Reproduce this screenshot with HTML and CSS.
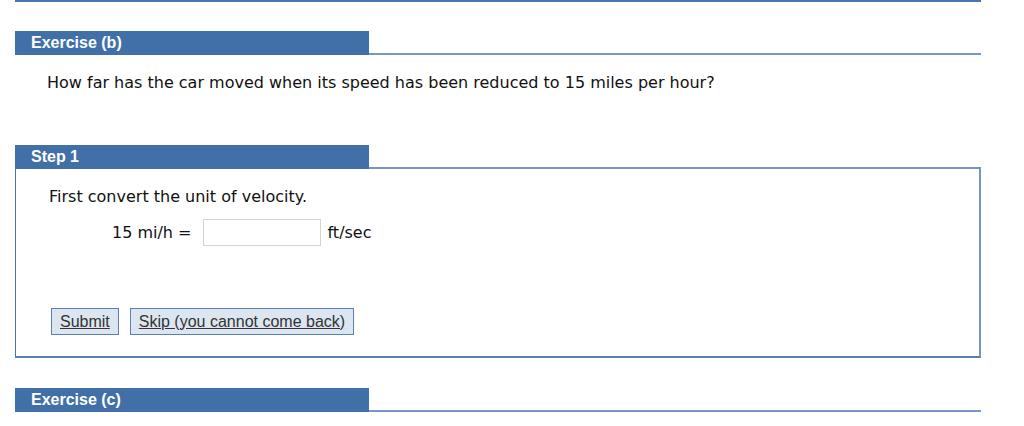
FILE: index.html
```html
<!DOCTYPE html>
<html lang="en">

<head>
  <meta charset="UTF-8" />
  <title>Exercise</title>
  <link rel="stylesheet" href="styles.css">
</head>

<body>
  <div class="page">
    <div class="top-rule"></div>

    <div class="section-head head-b">
      <div class="tab">Exercise (b)</div>
      <div class="rule"></div>
    </div>
    <p class="question">How far has the car moved when its speed has been reduced to 15 miles per hour?</p>

    <div class="section-head">
      <div class="tab">Step 1</div>
      <div class="rule"></div>
    </div>
    <div class="step-box">
      <p class="step-text">First convert the unit of velocity.</p>
      <div class="answer-row">
        <span class="answer-label">15 mi/h =</span>
        <input type="text" class="answer-input" />
        <span class="answer-unit">ft/sec</span>
      </div>
      <div class="actions">
        <button class="btn">Submit</button>
        <button class="btn">Skip (you cannot come back)</button>
      </div>
    </div>

    <div class="section-head head-c">
      <div class="tab">Exercise (c)</div>
      <div class="rule"></div>
    </div>
  </div>
</body>

</html>
```

FILE: styles.css
```css
/* Base */
* {
  box-sizing: border-box;
  margin: 0;
  padding: 0;
}

body {
  font-family: 'DejaVu Sans', Verdana, sans-serif;
  font-size: 16px;
  color: #111;
  background-color: #fff;
  overflow: hidden;
}

.page {
  width: 966px;
  margin-left: 15px;
}

.top-rule {
  border-top: 2px solid #4a74ab;
}

/* Section headers */
.section-head {
  display: flex;
  height: 24px;
}

.head-b {
  margin-top: 29px;
}

.head-c {
  margin-top: 30px;
}

.tab {
  width: 354px;
  background-color: #4170a8;
  color: #fff;
  font-family: 'Liberation Sans', Arial, sans-serif;
  font-weight: bold;
  font-size: 16px;
  line-height: 23px;
  padding-left: 16px;
}

.rule {
  flex: 1;
  border-bottom: 2px solid #7396c2;
}

/* Question */
.question {
  padding: 19px 0 0 32px;
  line-height: 18px;
  height: 90px;
}

/* Step box */
.step-box {
  border: 1px solid #4a74ab;
  border-top: none;
  border-right: 2px solid #7396c2;
  border-bottom: 2px solid #5a80b2;
  padding: 19px 0 21px 33px;
}

.step-text {
  line-height: 18px;
}

.answer-row {
  display: flex;
  align-items: center;
  margin-top: 13px;
  padding-left: 63px;
}

.answer-label {
  margin-right: 11px;
}

.answer-input {
  width: 118px;
  height: 27px;
  border: 1px solid #d3d3d3;
  outline: none;
}

.answer-unit {
  margin-left: 7px;
}

.actions {
  display: flex;
  gap: 11px;
  margin-top: 62px;
  padding-left: 2px;
}

.btn {
  font-family: 'Liberation Sans', Arial, sans-serif;
  font-size: 16px;
  color: #333;
  text-decoration: underline;
  background-color: #dce6f1;
  border: 1px solid #5a80b2;
  height: 27px;
  padding: 0 8px;
  cursor: pointer;
}
```
